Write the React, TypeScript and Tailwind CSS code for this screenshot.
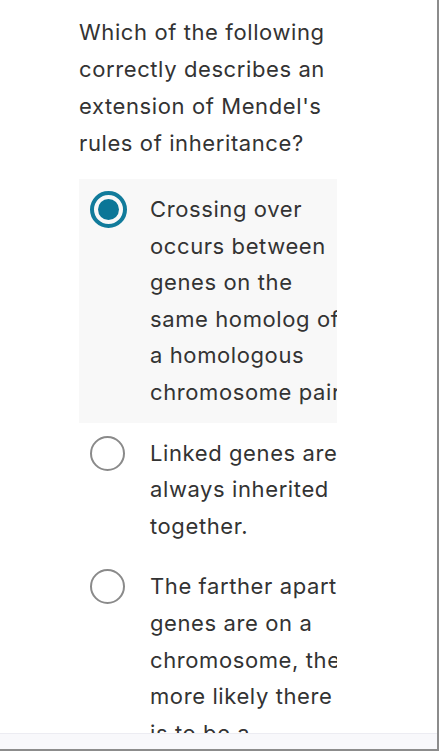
const options = [
  {
    text: 'Crossing over occurs between genes on the same homolog of a homologous chromosome pair.',
    selected: true,
  },
  { text: 'Linked genes are always inherited together.', selected: false },
  {
    text: 'The farther apart genes are on a chromosome, the more likely there is to be a crossover between them.',
    selected: false,
  },
];

function Radio({ selected }: { selected: boolean }) {
  if (selected) {
    return (
      <div className="flex h-[37px] w-[37px] items-center justify-center rounded-full border-[4px] border-[#117b9b]">
        <div className="h-[21px] w-[21px] rounded-full bg-[#0b7697]" />
      </div>
    );
  }
  return <div className="h-[35px] w-[35px] rounded-full border-[2.5px] border-[#8a8a8a]" />;
}

export default function App() {
  return (
    <div
      className="flex h-[751px] w-[439px] flex-col overflow-hidden border-r-2 border-[#8c8c8c] bg-white text-[#333]"
      style={{ fontFamily: 'Inter, "Noto Sans", sans-serif' }}
    >
      <div className="flex-1 overflow-hidden">
        <div className="ml-[79px] w-[258px] overflow-hidden">
          <p className="pt-[14px] text-[22px] leading-[37px] tracking-[0.6px]">
            Which of the following correctly describes an extension of Mendel's rules of inheritance?
          </p>
          <div className="mt-[17px] flex flex-col">
            {options.map((o, i) => (
              <div
                key={i}
                className={`flex w-[320px] items-start py-3 ${o.selected ? 'bg-[#f8f8f8]' : ''}`}
              >
                <div className="flex h-[37px] w-[71px] items-center pl-[11px]">
                  <Radio selected={o.selected} />
                </div>
                <p className="w-[202px] text-[22px] leading-[36.6px] tracking-[0.6px]">{o.text}</p>
              </div>
            ))}
          </div>
        </div>
      </div>
      <div className="h-[18px] shrink-0 border-t border-b-2 border-t-[#ececf2] border-b-[#8c8c8c] bg-[#f8f8fb]" />
    </div>
  );
}
